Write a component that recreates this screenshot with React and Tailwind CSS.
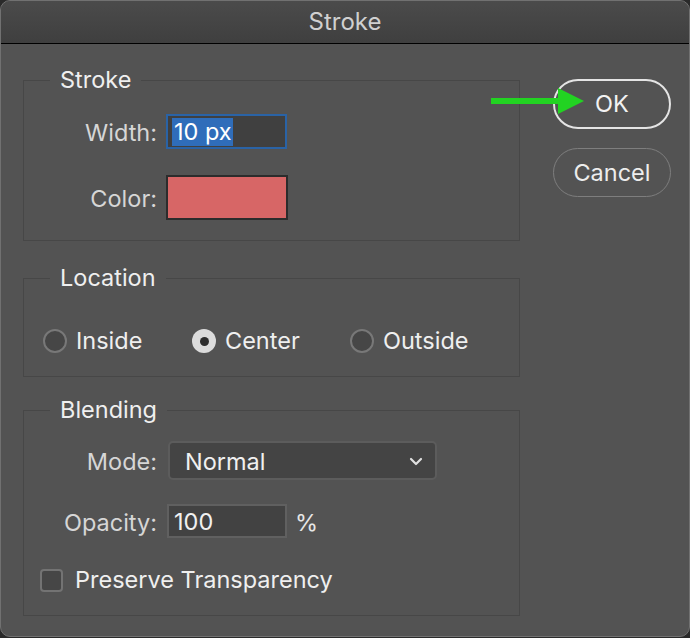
import React from "react";

const font = { fontFamily: "Inter, 'Liberation Sans', sans-serif" };

function Radio({ checked, label }) {
  return (
    <div className="flex items-center gap-[9px]">
      {checked ? (
        <div className="w-[24px] h-[24px] rounded-full bg-[#dcdcdc] flex items-center justify-center">
          <div className="w-[9px] h-[9px] rounded-full bg-[#2e2e2e]" />
        </div>
      ) : (
        <div className="w-[24px] h-[24px] rounded-full bg-[#464646] border-2 border-[#787878]" />
      )}
      <span className="text-[23.5px] leading-[28px] text-[#efefef]">{label}</span>
    </div>
  );
}

function Legend({ children }) {
  return (
    <legend className="ml-[26px] px-[10px] text-[23.5px] leading-[28px] text-[#efefef]">
      {children}
    </legend>
  );
}

export default function App() {
  return (
    <div className="w-[690px] h-[638px] bg-[#2a2a2a] relative" style={font}>
      <div className="h-[637px] rounded-[10px] border border-[#717171] bg-[#535353] overflow-hidden flex flex-col">
        <div className="h-[43px] shrink-0 bg-gradient-to-b from-[#4b4b4b] to-[#3f3f3f] border-b border-black flex items-center justify-center">
          <span className="text-[24px] text-[#d0d0d0] leading-none">Stroke</span>
        </div>
        <div className="flex pl-[22px]">
          <div className="w-[497px] flex flex-col">
            {/* Stroke */}
            <fieldset className="mt-[22px] border border-[#474747] pt-[20px] pb-[20px]">
              <Legend>Stroke</Legend>
              <div className="flex items-center">
                <span className="w-[133px] text-right text-[23.5px] leading-[28px] mt-[3px] text-[#d6d6d6]">Width:</span>
                <div className="ml-[9px] w-[121px] h-[35px] border-2 border-[#2a63a6] bg-[#404040] flex items-center pl-[4px]">
                  <span className="bg-[#2f6dba] text-white text-[23.5px] leading-[28px] pl-[2px] pr-[1px]">10 px</span>
                </div>
              </div>
              <div className="flex items-center mt-[26px]">
                <span className="w-[133px] text-right text-[23.5px] leading-[28px] mt-[3px] text-[#d6d6d6]">Color:</span>
                <div className="ml-[9px] w-[122px] h-[45px] border-2 border-[#2c2c2c] bg-[#d76666]" />
              </div>
            </fieldset>
            {/* Location */}
            <fieldset className="mt-[23px] border border-[#474747] pt-[35px] pb-[21px]">
              <Legend>Location</Legend>
              <div className="flex items-center pl-[19px]">
                <div className="w-[149px]"><Radio label="Inside" /></div>
                <div className="w-[158px]"><Radio checked label="Center" /></div>
                <Radio label="Outside" />
              </div>
            </fieldset>
            {/* Blending */}
            <fieldset className="mt-[19px] border border-[#474747] pt-[17px] pb-[21px]">
              <Legend>Blending</Legend>
              <div className="flex items-center">
                <span className="w-[133px] text-right text-[23.5px] leading-[28px] mt-[3px] text-[#d6d6d6]">Mode:</span>
                <div className="ml-[11px] w-[269px] h-[39px] rounded-[5px] border-2 border-[#5c5c5c] bg-[#444444] flex items-center justify-between pl-[15px] pr-[12px]">
                  <span className="text-[23.5px] leading-[28px] mt-[3px] text-[#f0f0f0]">Normal</span>
                  <svg width="14" height="9" viewBox="0 0 14 9" fill="none" className="mt-[2px]">
                    <path d="M2 2 L7 7 L12 2" stroke="#e0e0e0" strokeWidth="2.2" strokeLinecap="round" strokeLinejoin="round" />
                  </svg>
                </div>
              </div>
              <div className="flex items-center mt-[24px]">
                <span className="w-[133px] text-right text-[23.5px] leading-[28px] mt-[3px] text-[#d6d6d6]">Opacity:</span>
                <div className="ml-[10px] w-[120px] h-[34px] border-2 border-[#606060] bg-[#424242] flex items-center pl-[5px]">
                  <span className="text-[23.5px] leading-[28px] mt-[2px] text-[#f0f0f0]">100</span>
                </div>
                <span className="ml-[8px] text-[23.5px] leading-[28px] mt-[3px] text-[#e6e6e6]">%</span>
              </div>
              <div className="flex items-center mt-[28px] pl-[16px]">
                <div className="w-[23px] h-[23px] rounded-[4px] border-2 border-[#737373] bg-[#464646]" />
                <span className="ml-[12px] text-[23.5px] leading-[28px] text-[#efefef]">Preserve Transparency</span>
              </div>
            </fieldset>
          </div>
          <div className="ml-[33px] mt-[35px] flex flex-col gap-[19px]">
            <div className="w-[118px] h-[50px] rounded-full border-2 border-[#e4e4e4] flex items-center justify-center">
              <span className="text-[23.5px] text-[#f2f2f2]">OK</span>
            </div>
            <div className="w-[118px] h-[49px] rounded-full border-[1.5px] border-[#7e7e7e] flex items-center justify-center">
              <span className="text-[23.5px] text-[#ededed]">Cancel</span>
            </div>
          </div>
        </div>
      </div>
      <svg className="absolute left-[488px] top-[86px]" width="100" height="30" viewBox="0 0 100 30">
        <rect x="3" y="12" width="70" height="6" fill="#22d322" />
        <polygon points="70,2 96,15 70,28" fill="#22d322" />
      </svg>
    </div>
  );
}
